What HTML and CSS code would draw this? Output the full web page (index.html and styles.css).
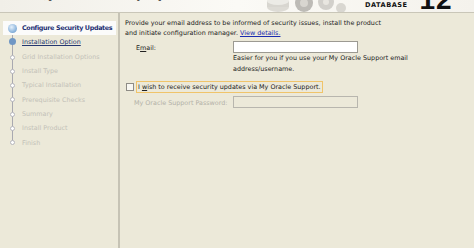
FILE: index.html
```html
<!DOCTYPE html>
<html lang="en">

<head>
    <meta charset="UTF-8">
    <title>Configure Security Updates</title>
    <link rel="stylesheet" href="styles.css">
</head>

<body>
    <header class="banner">
        <div class="banner-title">Configure Security Updates</div>
        <svg class="gears" width="84" height="13" viewBox="0 0 84 13">
            <ellipse cx="14" cy="7" rx="11" ry="5" fill="#dddbd5" />
            <rect x="3" y="1" width="22" height="6" fill="#d8d6d0" />
            <ellipse cx="14" cy="1" rx="11" ry="4" fill="#ecebe6" />
            <circle cx="40" cy="3" r="9" fill="#bdbbb6" />
            <circle cx="40" cy="3" r="4" fill="#d8d6d0" />
            <circle cx="62" cy="2" r="8" fill="#d2d0cb" />
            <circle cx="62" cy="2" r="3" fill="#e8e6e0" />
            <circle cx="77" cy="8" r="5" fill="#d9d7d1" />
        </svg>
        <div class="brand">
            <span class="brand-db">DATABASE</span>
            <span class="brand-ver">12</span>
        </div>
    </header>

    <main class="wizard">
        <!-- STEPS -->
        <nav class="steps">
            <div class="step current"><span class="dot"></span>Configure Security Updates</div>
            <div class="step next"><span class="dot"></span>Installation Option</div>
            <div class="step"><span class="dot"></span>Grid Installation Options</div>
            <div class="step"><span class="dot"></span>Install Type</div>
            <div class="step"><span class="dot"></span>Typical Installation</div>
            <div class="step"><span class="dot"></span>Prerequisite Checks</div>
            <div class="step"><span class="dot"></span>Summary</div>
            <div class="step"><span class="dot"></span>Install Product</div>
            <div class="step"><span class="dot"></span>Finish</div>
        </nav>

        <!-- FORM -->
        <section class="content">
            <p class="intro">
                Provide your email address to be informed of security issues, install the product
                and initiate configuration manager. <a href="#">View details.</a>
            </p>
            <div class="row">
                <label class="field-label" for="email">E<u>m</u>ail:</label>
                <div class="field">
                    <input type="text" id="email" />
                    <p class="hint">Easier for you if you use your My Oracle Support email address/username.</p>
                </div>
            </div>
            <div class="check-row">
                <span class="box"></span>
                <span class="check-label">I <u>w</u>ish to receive security updates via My Oracle Support.</span>
            </div>
            <div class="row disabled">
                <label class="field-label" for="pass">My Oracle Support Password:</label>
                <div class="field">
                    <input type="password" id="pass" disabled />
                </div>
            </div>
        </section>
    </main>
</body>

</html>
```

FILE: styles.css
```css
* {
    margin: 0;
    padding: 0;
    box-sizing: border-box;
    font-family: 'DejaVu Sans', Verdana, sans-serif;
}

body {
    width: 474px;
    height: 248px;
    overflow: hidden;
    background-color: #ece9d9;
    font-size: 6.4px;
    color: #222;
}

.banner {
    height: 13px;
    display: flex;
    align-items: flex-end;
    overflow: hidden;
    background-image: linear-gradient(90deg, #f1efe8 0%, #fbfaf6 50%, #f4f2ec 100%);
    border-bottom: 1px solid #c9c6b8;
}

.banner-title {
    flex-shrink: 0;
    font-size: 13px;
    font-weight: bold;
    color: #555;
    line-height: 10px;
    margin-left: 6px;
    margin-bottom: 11px;
    width: 258px;
    white-space: nowrap;
    overflow: hidden;
}

.gears {
    flex-shrink: 0;
    align-self: flex-start;
}

.brand {
    flex-shrink: 0;
    display: flex;
    align-items: flex-end;
    height: 13px;
    margin-left: 17px;
}

.brand-db {
    font-weight: bold;
    font-size: 6.6px;
    letter-spacing: 0.5px;
    color: #111;
    margin-bottom: 3px;
}

.brand-ver {
    font-family: 'Liberation Sans', Arial, sans-serif;
    font-weight: bold;
    font-size: 28px;
    line-height: 18px;
    margin-left: 12px;
    margin-bottom: 3px;
    letter-spacing: 1px;
    color: #111;
}

.wizard {
    display: flex;
    height: 235px;
}

.steps {
    width: 120px;
    flex-shrink: 0;
    padding-top: 8px;
    border-right: 2px solid #c6c3b5;
    position: relative;
}

.steps::before {
    content: '';
    position: absolute;
    left: 12px;
    top: 15px;
    height: 114px;
    width: 1px;
    background-color: #a9a9b0;
}

.step {
    height: 14.3px;
    display: flex;
    align-items: center;
    padding-left: 22px;
    color: #c3c1b8;
    position: relative;
    white-space: nowrap;
}

.step .dot {
    position: absolute;
    left: 10px;
    top: 5px;
    width: 5px;
    height: 5px;
    border-radius: 50%;
    border: 1px solid #b6b6bc;
    background-color: #fff;
}

.step.current {
    background-color: #fbfbfa;
    color: #1c2f73;
    font-weight: bold;
    letter-spacing: -0.35px;
    margin-left: 3px;
    margin-right: 2px;
    padding-left: 19px;
}

.step.current .dot {
    left: 5px;
    top: 3px;
    width: 9px;
    height: 9px;
    border: none;
    background-image: radial-gradient(circle at 40% 35%, #e6f1fb 0%, #8fb7de 60%, #5b8fc4 100%);
}

.step.next {
    color: #24366f;
    text-decoration: underline;
}

.step.next .dot {
    left: 9px;
    top: 3px;
    width: 7px;
    height: 7px;
    border: none;
    background-color: #6f96c4;
}

.content {
    flex: 1;
    padding: 5px 0 0 5px;
}

.intro {
    line-height: 10px;
    width: 262px;
}

.intro a {
    color: #1b2bb0;
}

.row {
    display: flex;
    margin-top: 3px;
}

.field-label {
    width: 108px;
    padding-left: 11px;
    padding-top: 3px;
}

.field input {
    display: block;
    width: 125px;
    height: 12px;
    border: 1px solid #9c9a92;
    background-color: #fff;
    outline: none;
}

.hint {
    line-height: 11px;
    margin-top: 0;
    width: 236px;
}

.check-row {
    display: flex;
    align-items: center;
    margin-top: 6px;
    margin-left: 1px;
}

.box {
    width: 8px;
    height: 8px;
    border: 1px solid #8e8c86;
    background-color: #f8f7f2;
}

.check-label {
    margin-left: 2px;
    padding: 1px 1px;
    border: 1px solid #f0c46a;
}

.row.disabled {
    margin-top: 3px;
    color: #b3b1a8;
}

.row.disabled .field-label {
    padding-left: 9px;
}

.row.disabled input {
    background-color: #ece9d9;
    border-color: #b8b6ae;
}
```
